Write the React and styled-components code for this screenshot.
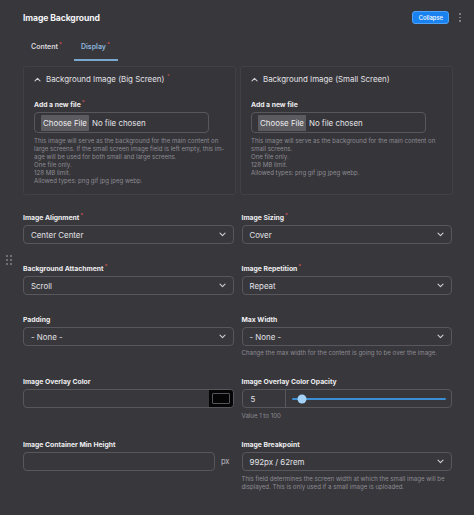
import React from "react"
import styled, { createGlobalStyle } from "styled-components"

const Global = createGlobalStyle`
  html, body {
    margin: 0;
    padding: 0;
    background: #38373c;
  }
  body {
    font-family: Inter, "Noto Sans", "Liberation Sans", sans-serif;
    color: #e8e8ea;
    -webkit-font-smoothing: antialiased;
  }
`

const Page = styled.div`
  position: relative;
  width: 474px;
  height: 515px;
  box-sizing: border-box;
  padding: 11px 21px 0 23px;
  overflow: hidden;
`

const Header = styled.div`
  display: flex;
  align-items: center;
  justify-content: space-between;
  height: 13px;
  margin: 0 -10px 14px 0;
`

const Title = styled.h1`
  margin: 0;
  font-size: 8.6px;
  font-weight: 700;
  color: #f4f4f6;
  letter-spacing: -0.1px;
`

const Actions = styled.div`
  display: flex;
  align-items: center;
  gap: 10px;
`

const CollapseButton = styled.button`
  height: 13px;
  width: 37px;
  padding: 0;
  border: 1px solid #4fa2f7;
  border-radius: 3px;
  background: #1a82f0;
  color: #ffffff;
  font-family: inherit;
  font-size: 5.8px;
  font-weight: 500;
`

const Kebab = styled.span`
  display: flex;
  flex-direction: column;
  gap: 2px;
  padding-right: 2px;
  span {
    width: 1.6px;
    height: 1.6px;
    border-radius: 50%;
    background: #8c8b91;
  }
`

const Tabs = styled.div`
  display: flex;
  gap: 4px;
  margin-left: 1px;
`

const Tab = styled.div`
  padding: 4px 8px 7px 7px;
  font-size: 7px;
  line-height: 10px;
  font-weight: 600;
  color: ${p => (p.$active ? "#8db7de" : "#d8d8dc")};
  border-bottom: 2px solid ${p => (p.$active ? "#7aa8cf" : "transparent")};
`

const Req = styled.span`
  color: #c0524e;
  font-size: 5.5px;
  vertical-align: top;
  margin-left: 1px;
  line-height: 7px;
`

const FileGrid = styled.div`
  display: grid;
  grid-template-columns: 1fr 1fr;
  gap: 4px;
  margin-top: 5px;
`

const Fieldset = styled.div`
  border: 1px solid #414046;
  border-radius: 3px;
  background: #36353a;
  padding: 6px 10px 9px;
`

const Legend = styled.div`
  display: flex;
  align-items: center;
  gap: 5px;
  height: 12px;
  font-size: 7.9px;
  color: #e2e2e6;
  margin-bottom: 15px;
  svg {
    flex: none;
  }
`

const Label = styled.div`
  font-size: 6.8px;
  line-height: 9px;
  font-weight: 700;
  color: #eeeef0;
  margin-bottom: 3px;
`

const FileBox = styled.div`
  display: flex;
  align-items: center;
  gap: 3px;
  width: 175px;
  height: 21px;
  box-sizing: border-box;
  border: 1px solid #58575d;
  border-radius: 4px;
  padding: 0 6px;
  font-size: 7.9px;
  color: #e4e4e8;
`

const ChooseButton = styled.span`
  background: #5c5b60;
  color: #ececef;
  padding: 2px 2px;
  line-height: 12px;
  border-radius: 1px;
`

const Help = styled.div`
  font-size: 6.1px;
  line-height: 8px;
  color: #8d8c92;
  margin-top: ${p => p.$mt || 4}px;
  white-space: nowrap;
`

const FormGrid = styled.div`
  display: grid;
  grid-template-columns: 1fr 1fr;
  column-gap: 8px;
  row-gap: 20px;
  margin-top: 18px;
  margin-right: 1px;
`

const Field = styled.div`
  min-width: 0;
`

const Control = styled.div`
  display: flex;
  align-items: center;
  height: 19px;
  box-sizing: border-box;
  border: 1px solid #58575d;
  border-radius: 4px;
  overflow: hidden;
`

const SelectBox = styled(Control)`
  justify-content: space-between;
  padding: 0 7px 0 7px;
  font-size: 7.9px;
  color: #e2e2e6;
`

const ColorSwatch = styled.div`
  margin-left: auto;
  width: 24px;
  height: 100%;
  background: #050505;
  display: flex;
  align-items: center;
  justify-content: center;
  span {
    width: 16px;
    height: 9px;
    border: 1px solid #55545a;
    border-radius: 1px;
  }
`

const NumberPart = styled.div`
  width: 43px;
  height: 100%;
  box-sizing: border-box;
  border-right: 1px solid #58575d;
  display: flex;
  align-items: center;
  padding-left: 8px;
  font-size: 7.9px;
  color: #e2e2e6;
`

const SliderTrack = styled.div`
  position: relative;
  flex: 1;
  height: 2px;
  margin: 0 5px 0 6px;
  background: #3b8ed2;
  border-radius: 1px;
`

const SliderThumb = styled.div`
  position: absolute;
  top: 50%;
  left: 10px;
  width: 9px;
  height: 9px;
  border-radius: 50%;
  background: #a3d2f6;
  transform: translate(-50%, -50%);
`

const InputRow = styled.div`
  display: flex;
  align-items: center;
  gap: 6px;
  padding-right: 4px;
  span {
    font-size: 7.6px;
    color: #bdbcc2;
  }
`

const DragHandle = styled.div`
  position: absolute;
  left: 6px;
  top: 255px;
  display: grid;
  grid-template-columns: repeat(2, 1.5px);
  gap: 2.5px;
  span {
    width: 1.5px;
    height: 1.5px;
    border-radius: 50%;
    background: #7c7b81;
  }
`

const ChevronDown = () => (
  <svg width="7" height="5" viewBox="0 0 7 5" fill="none">
    <path d="M1 1.2L3.5 3.6L6 1.2" stroke="#d0d0d4" strokeWidth="1.1" strokeLinecap="round" strokeLinejoin="round" />
  </svg>
)

const ChevronUp = () => (
  <svg width="7" height="5" viewBox="0 0 7 5" fill="none">
    <path d="M1 3.8L3.5 1.4L6 3.8" stroke="#d0d0d4" strokeWidth="1.1" strokeLinecap="round" strokeLinejoin="round" />
  </svg>
)

function Select({ value }) {
  return (
    <SelectBox>
      <span>{value}</span>
      <ChevronDown />
    </SelectBox>
  )
}

function FileField({ title, required, lines }) {
  return (
    <Fieldset>
      <Legend>
        <ChevronUp />
        <span>
          {title}
          {required && <Req> *</Req>}
        </span>
      </Legend>
      <Label>
        Add a new file{required && <Req>*</Req>}
      </Label>
      <FileBox>
        <ChooseButton>Choose File</ChooseButton>
        <span>No file chosen</span>
      </FileBox>
      <Help>
        {lines.map((l, i) => (
          <div key={i}>{l}</div>
        ))}
      </Help>
    </Fieldset>
  )
}

export default function App() {
  return (
    <Page>
      <Global />
      <Header>
        <Title>Image Background</Title>
        <Actions>
          <CollapseButton>Collapse</CollapseButton>
          <Kebab>
            <span />
            <span />
            <span />
          </Kebab>
        </Actions>
      </Header>
      <Tabs>
        <Tab>
          Content<Req>*</Req>
        </Tab>
        <Tab $active>
          Display<Req>*</Req>
        </Tab>
      </Tabs>
      <FileGrid>
        <FileField
          title="Background Image (Big Screen)"
          required
          lines={[
            "This image will serve as the background for the main content on",
            "large screens. If the small screen image field is left empty, this im-",
            "age will be used for both small and large screens.",
            "One file only.",
            "128 MB limit.",
            "Allowed types: png gif jpg jpeg webp.",
          ]}
        />
        <FileField
          title="Background Image (Small Screen)"
          lines={[
            "This image will serve as the background for the main content on",
            "small screens.",
            "One file only.",
            "128 MB limit.",
            "Allowed types: png gif jpg jpeg webp.",
          ]}
        />
      </FileGrid>
      <DragHandle>
        {Array.from({ length: 6 }).map((_, i) => (
          <span key={i} />
        ))}
      </DragHandle>
      <FormGrid>
        <Field>
          <Label>
            Image Alignment<Req>*</Req>
          </Label>
          <Select value="Center Center" />
        </Field>
        <Field>
          <Label>
            Image Sizing<Req>*</Req>
          </Label>
          <Select value="Cover" />
        </Field>
        <Field>
          <Label>
            Background Attachment<Req>*</Req>
          </Label>
          <Select value="Scroll" />
        </Field>
        <Field>
          <Label>
            Image Repetition<Req>*</Req>
          </Label>
          <Select value="Repeat" />
        </Field>
        <Field>
          <Label>Padding</Label>
          <Select value="- None -" />
        </Field>
        <Field>
          <Label>Max Width</Label>
          <Select value="- None -" />
          <Help $mt={3}>Change the max width for the content is going to be over the image.</Help>
        </Field>
        <Field>
          <Label>Image Overlay Color</Label>
          <Control>
            <ColorSwatch>
              <span />
            </ColorSwatch>
          </Control>
        </Field>
        <Field>
          <Label>Image Overlay Color Opacity</Label>
          <Control>
            <NumberPart>5</NumberPart>
            <SliderTrack>
              <SliderThumb />
            </SliderTrack>
          </Control>
          <Help>Value 1 to 100</Help>
        </Field>
        <Field>
          <Label>Image Container Min Height</Label>
          <InputRow>
            <Control style={{ flex: 1 }} />
            <span>px</span>
          </InputRow>
        </Field>
        <Field>
          <Label>Image Breakpoint</Label>
          <Select value="992px / 62rem" />
          <Help>
            <div>This field determines the screen width at which the small image will be</div>
            <div>displayed. This is only used if a small image is uploaded.</div>
          </Help>
        </Field>
      </FormGrid>
    </Page>
  )
}
